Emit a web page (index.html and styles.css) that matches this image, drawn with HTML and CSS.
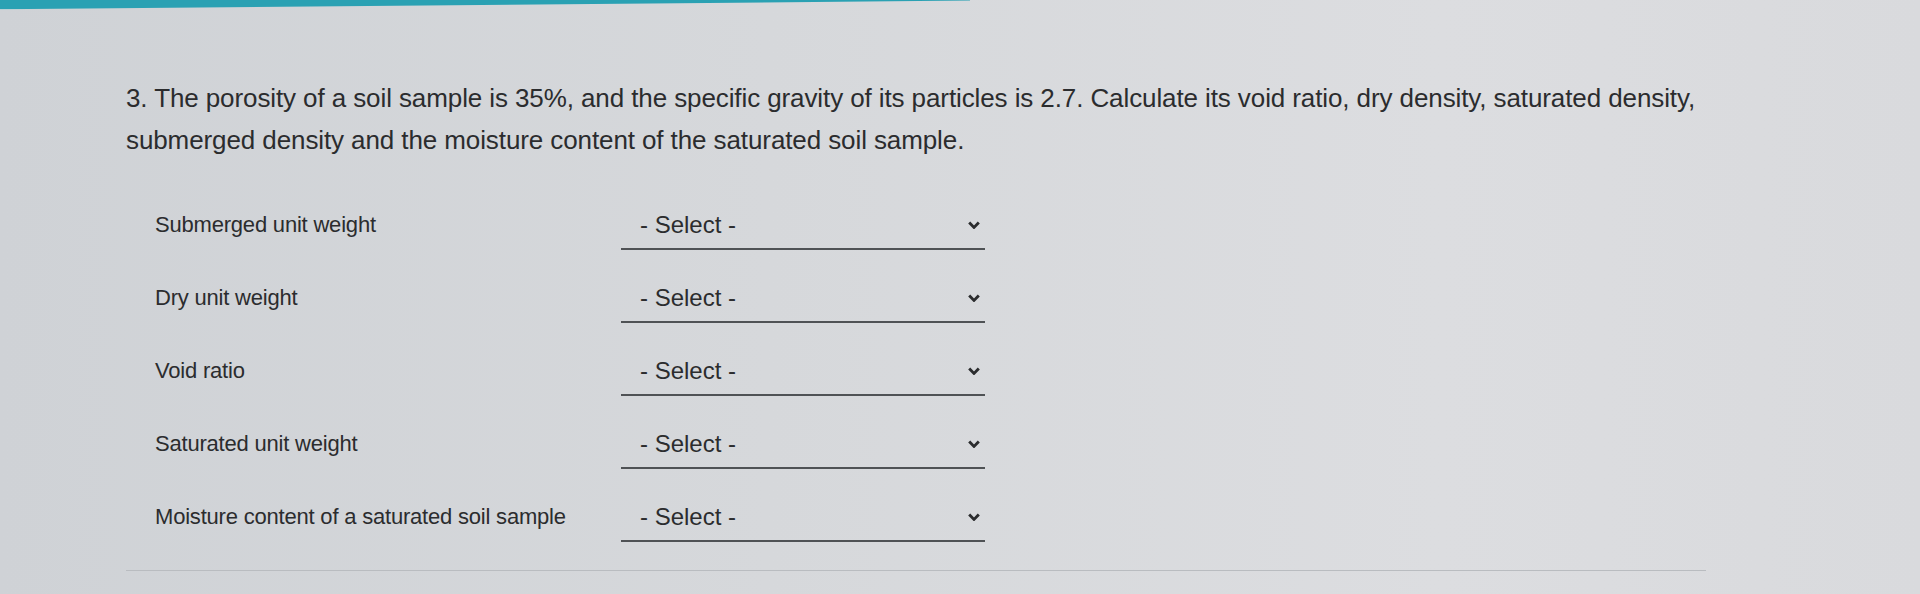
FILE: index.html
```html
<!DOCTYPE html>
<html lang="en">
<head>
<meta charset="utf-8">
<title>Question 3</title>
<link rel="stylesheet" href="styles.css">
</head>
<body>
<div class="topbar"></div>
<main class="page">
  <p class="question">3. The porosity of a soil sample is 35%, and the specific gravity of its particles is 2.7. Calculate its void ratio, dry density, saturated density, submerged density and the moisture content of the saturated soil sample.</p>
  <div class="rows">
    <div class="row">
      <span class="label">Submerged unit weight</span>
      <div class="select"><span>- Select -</span><svg class="chev" viewBox="0 0 10 6"><path d="M1 1 L5 5 L9 1"/></svg></div>
    </div>
    <div class="row">
      <span class="label">Dry unit weight</span>
      <div class="select"><span>- Select -</span><svg class="chev" viewBox="0 0 10 6"><path d="M1 1 L5 5 L9 1"/></svg></div>
    </div>
    <div class="row">
      <span class="label">Void ratio</span>
      <div class="select"><span>- Select -</span><svg class="chev" viewBox="0 0 10 6"><path d="M1 1 L5 5 L9 1"/></svg></div>
    </div>
    <div class="row">
      <span class="label">Saturated unit weight</span>
      <div class="select"><span>- Select -</span><svg class="chev" viewBox="0 0 10 6"><path d="M1 1 L5 5 L9 1"/></svg></div>
    </div>
    <div class="row">
      <span class="label">Moisture content of a saturated soil sample</span>
      <div class="select"><span>- Select -</span><svg class="chev" viewBox="0 0 10 6"><path d="M1 1 L5 5 L9 1"/></svg></div>
    </div>
  </div>
  <div class="rule"></div>
</main>
</body>
</html>
```
FILE: styles.css
```css
html, body {
  margin: 0;
  padding: 0;
}
body {
  width: 1920px;
  height: 594px;
  overflow: hidden;
  background: linear-gradient(90deg, #cfd2d6 0%, #d6d8db 40%, #dcdde0 75%, #d9dadd 100%);
  font-family: "Liberation Sans", Arial, sans-serif;
  color: #2b2c2e;
}
.topbar {
  width: 970px;
  height: 9px;
  background: #2aa1b3;
  clip-path: polygon(0 0, 100% 0, 100% 5%, 0 85%);
  border-bottom: 2px solid #eef3f5;
}
.page {
  padding: 66px 0 0 126px;
}
.question {
  margin: 0;
  width: 1620px;
  font-size: 26px;
  line-height: 42px;
  letter-spacing: -0.1px;
}
.rows {
  margin-top: 27px;
  padding-left: 29px;
  display: flex;
  flex-direction: column;
}
.row {
  height: 73px;
  display: grid;
  grid-template-columns: 466px 364px;
  align-items: center;
}
.label {
  font-size: 22px;
  letter-spacing: -0.2px;
}
.select {
  height: 48px;
  box-sizing: border-box;
  border-bottom: 2px solid #4f5255;
  display: flex;
  align-items: center;
  justify-content: space-between;
  padding: 0 5px 0 19px;
  font-size: 24px;
  margin-top: 2px;
}
.chev {
  width: 12px;
  height: 8px;
  fill: none;
  stroke: #2b2c2e;
  stroke-width: 2.4;
}
.rule {
  margin-top: 17px;
  width: 1580px;
  height: 1px;
  background: #b9bcc0;
}
```
